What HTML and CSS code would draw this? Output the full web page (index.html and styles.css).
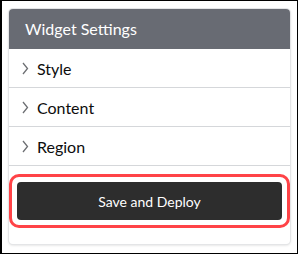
FILE: index.html
```html
<!DOCTYPE html>
<html lang="en">
<head>
  <meta charset="UTF-8" />
  <meta name="viewport" content="width=device-width, initial-scale=1.0"/>
  <title>Widget Settings</title>
  <link rel="stylesheet" href="styles.css">
</head>
<body>
  <div class="frame">
    <div class="card">
      <div class="card-header">Widget Settings</div>

      <div class="row">
        <svg class="chevron" width="7" height="13" viewBox="0 0 7 13"><polyline points="1,1 5.5,6.5 1,12" /></svg>
        <span>Style</span>
      </div>
      <div class="row">
        <svg class="chevron" width="7" height="13" viewBox="0 0 7 13"><polyline points="1,1 5.5,6.5 1,12" /></svg>
        <span>Content</span>
      </div>
      <div class="row">
        <svg class="chevron" width="7" height="13" viewBox="0 0 7 13"><polyline points="1,1 5.5,6.5 1,12" /></svg>
        <span>Region</span>
      </div>

      <div class="highlight">
        <button class="deploy-btn">Save and Deploy</button>
      </div>
    </div>
  </div>
</body>
</html>
```

FILE: styles.css
```css
body {
  margin: 0;
  font-family: Lato, 'Noto Sans', sans-serif;
  background: #fff;
}

.frame {
  width: 298px;
  height: 254px;
  box-sizing: border-box;
  border: 1px solid #000;
  border-left-width: 2px;
  padding: 8px 0 0 7px;
  background: #fff;
}

.card {
  width: 281px;
  border-radius: 4px;
  background: #fff;
  box-shadow: 0 0 0 1px #e4e5e7, 0 1px 3px rgba(0, 0, 0, 0.18);
  overflow: hidden;
  padding-bottom: 16px;
}

.card-header {
  height: 40px;
  line-height: 40px;
  padding-left: 16px;
  background: #686b73;
  color: #fff;
  font-size: 16px;
}

.row {
  height: 38px;
  display: flex;
  align-items: center;
  gap: 8px;
  padding-left: 13px;
  border-bottom: 1px solid #d5d7da;
  font-size: 16px;
  color: #0d0d0d;
}

.chevron {
  fill: none;
  stroke: #6d6f73;
  stroke-width: 1.3;
}

.highlight {
  margin-top: 8px;
  border: 3px solid #ff4347;
  border-radius: 10px;
  padding: 5px;
}

.deploy-btn {
  display: block;
  width: 100%;
  height: 38px;
  border: none;
  border-radius: 4px;
  background: #2d2d2d;
  color: #fff;
  font-family: Lato, 'Noto Sans', sans-serif;
  font-size: 14px;
}
```
